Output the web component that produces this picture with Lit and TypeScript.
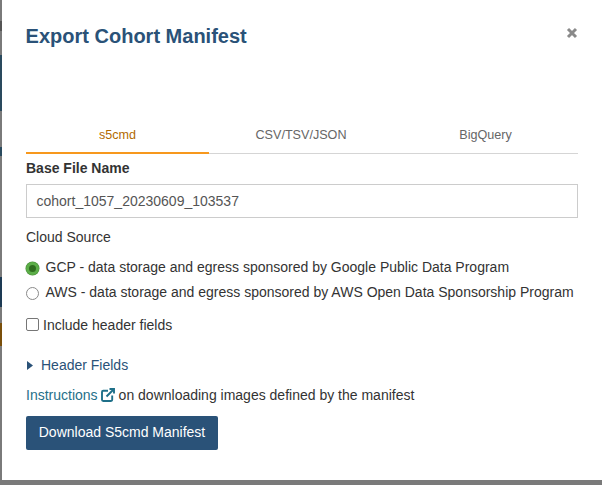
import { LitElement, html, css } from "lit";
import { customElement } from "lit/decorators.js";

@customElement("app-root")
export class AppRoot extends LitElement {
  static styles = css`
    :host {
      display: block;
      width: 602px;
      height: 485px;
      overflow: hidden;
      position: relative;
      background: #7a7a7a;
      font-family: "Liberation Sans", Arial, sans-serif;
      color: #333;
      font-size: 14px;
    }
    .strip { position: absolute; left: 0; width: 2px; }
    .s0 { top: 21px; height: 10px; background: #555; }
    .s1 { top: 55px; height: 56px; background: #2a4a5e; }
    .s4 { top: 147px; height: 9px; background: #2a4a5e; }
    .s2 { top: 277px; height: 30px; background: #1d3a54; }
    .s3 { top: 323px; height: 23px; background: #7a4f0a; }
    .modal {
      position: absolute;
      left: 2px;
      top: 0;
      width: 600px;
      height: 480px;
      box-sizing: border-box;
      background: #fff;
      padding: 24px 24px 0 24px;
      display: flex;
      flex-direction: column;
    }
    .head {
      display: flex;
      justify-content: space-between;
      align-items: flex-start;
      height: 99px;
    }
    h4 {
      margin: 0 0 0 -0.4px;
      font-size: 20px;
      line-height: 24px;
      font-weight: 700;
      color: #2a5278;
    }
    .close { margin: 3px 0 0 0; display: block; }
    .tabs {
      display: grid;
      grid-template-columns: 183px 184px 1fr;
      border-bottom: 1px solid #d5d5d5;
      height: 30px;
      box-sizing: content-box;
    }
    .tab {
      text-align: center;
      font-size: 12.6px;
      line-height: 14px;
      padding-top: 5px;
      color: #666;
      height: 30px;
      box-sizing: border-box;
    }
    .tab.active { color: #b26a00; border-bottom: 2px solid #f7981d; height: 31px; }
    .label { font-weight: 700; font-size: 14px; line-height: 16px; margin-top: 6px; color: #333; }
    .input {
      margin-top: 8px;
      height: 34px;
      box-sizing: border-box;
      border: 1px solid #ccc;
      padding: 0 9.5px;
      font-size: 14px;
      line-height: 32px;
      color: #555;
    }
    .cloud { margin-top: 11px; line-height: 16px; }
    .radios { margin-top: 14px; display: flex; flex-direction: column; gap: 9px; }
    .radio { display: flex; align-items: center; gap: 6.5px; height: 16px; line-height: 16px; }
    .dot {
      width: 13px;
      height: 13px;
      margin-top: 2px;
      box-sizing: border-box;
      border-radius: 50%;
      border: 1px solid #8a8a8a;
      background: #fff;
      flex: none;
    }
    .dot.on { border: 3px solid #5cae48; background: #2f6d1f; box-shadow: 0 0 0 0.5px #4a8f3a; }
    .check { display: flex; align-items: center; gap: 4px; margin-top: 17px; height: 16px; }
    .box {
      width: 11px;
      height: 11px;
      margin-top: -2px;
      border: 1px solid #767676;
      border-radius: 2px;
      background: #fff;
      flex: none;
    }
    .disclosure {
      margin-top: 24px;
      display: flex;
      align-items: center;
      gap: 8px;
      color: #2a5278;
      height: 16px;
    }
    .tri { width: 6px; height: 9px; display: block; flex: none; margin-left: 1px; }
    .instr { margin-top: 14px; height: 16px; line-height: 16px; display: flex; align-items: center; white-space: pre; }
    .instr a { color: #1f7089; text-decoration: none; }
    .ext { display: block; margin: 0 4px 0 3px; }
    button {
      margin-top: 13px;
      align-self: flex-start;
      width: 192px;
      height: 34px;
      border: 0;
      border-radius: 2px;
      background: #2a5278;
      color: #fff;
      font: 14px "Liberation Sans", Arial, sans-serif;
      padding: 0 0 2px 0;
    }
  `;

  render() {
    return html`
      <div class="strip s0"></div>
      <div class="strip s1"></div>
      <div class="strip s4"></div>
      <div class="strip s2"></div>
      <div class="strip s3"></div>
      <div class="modal">
        <div class="head">
          <h4>Export Cohort Manifest</h4>
          <svg class="close" width="12" height="12" viewBox="0 0 12 12" aria-label="Close">
            <path d="M2 2 L10 10 M10 2 L2 10" stroke="#8a8a8a" stroke-width="3" fill="none" />
          </svg>
        </div>
        <div class="tabs">
          <div class="tab active">s5cmd</div>
          <div class="tab">CSV/TSV/JSON</div>
          <div class="tab">BigQuery</div>
        </div>
        <div class="label">Base File Name</div>
        <div class="input">cohort_1057_20230609_103537</div>
        <div class="cloud">Cloud Source</div>
        <div class="radios">
          <div class="radio"><span class="dot on"></span>GCP - data storage and egress sponsored by Google Public Data Program</div>
          <div class="radio"><span class="dot"></span>AWS - data storage and egress sponsored by AWS Open Data Sponsorship Program</div>
        </div>
        <div class="check"><span class="box"></span>Include header fields</div>
        <div class="disclosure">
          <svg class="tri" viewBox="0 0 6 9"><path d="M0 0 L6 4.5 L0 9 Z" fill="#2a5278" /></svg>
          Header Fields
        </div>
        <div class="instr"><a>Instructions</a><svg class="ext" width="14" height="14" viewBox="0 0 14 14" fill="none" stroke="#1f7089" stroke-width="1.9"><path d="M7 2.8 H2.2 a1.2 1.2 0 0 0 -1.2 1.2 V11.8 a1.2 1.2 0 0 0 1.2 1.2 H10 a1.2 1.2 0 0 0 1.2 -1.2 V7.5" /><path d="M5.5 8.5 L13 1" /><path d="M8.5 1 H13 V5.5" /></svg>on downloading images defined by the manifest</div>
        <button>Download S5cmd Manifest</button>
      </div>
    `;
  }
}
